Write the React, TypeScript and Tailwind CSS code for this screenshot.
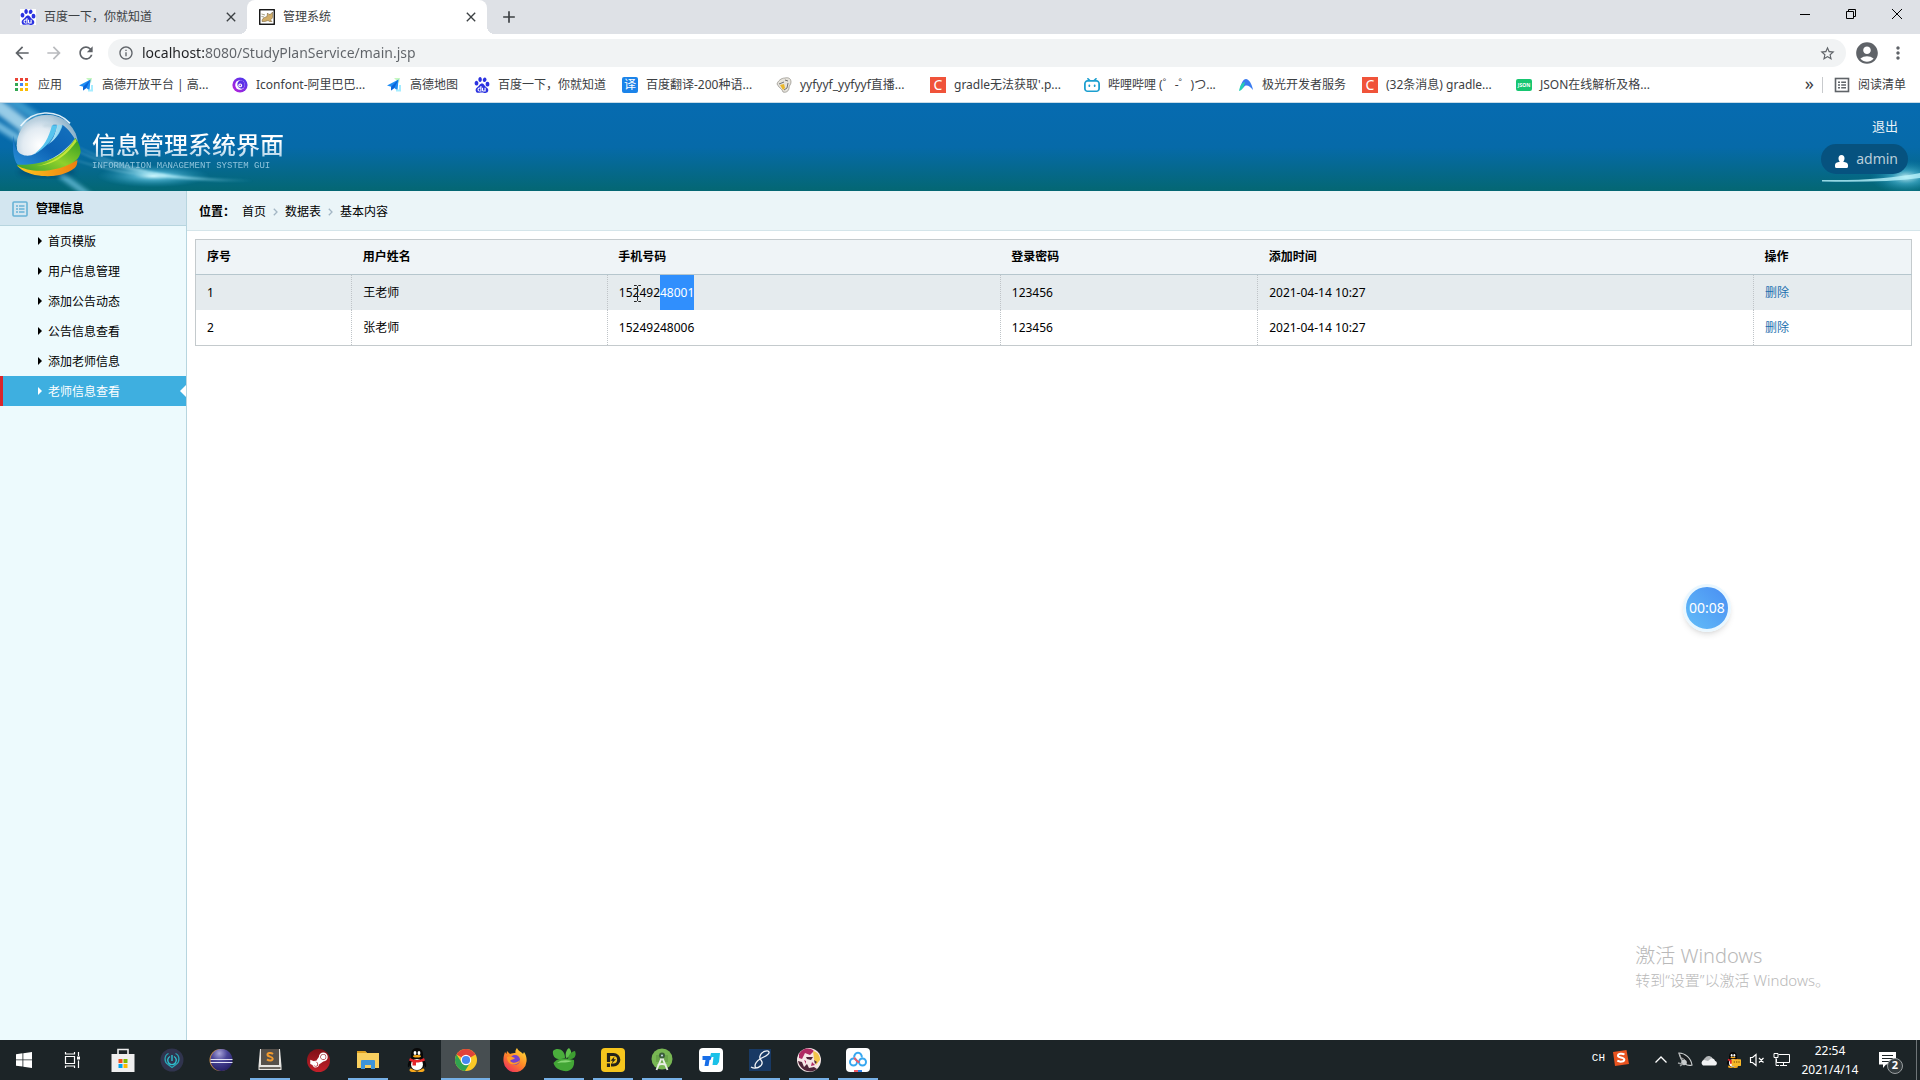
import React from 'react'
import { useState } from 'react'
import { SiBaidu, SiBilibili } from 'react-icons/si'
import { FaSteamSymbol } from 'react-icons/fa'
import { MdAccountCircle, MdMoreVert, MdStarBorder, MdInfoOutline, MdRefresh, MdArrowBack, MdArrowForward, MdClose, MdAdd } from 'react-icons/md'

interface Teacher {
    id: number;
    name: string;
    phone: string;
    password: string;
    time: string;
}

interface Bookmark {
    label: string;
    width: string;
    icon: React.ReactNode;
}

const teachers: Teacher[] = [
    { id: 1, name: '王老师', phone: '15249248001', password: '123456', time: '2021-04-14 10:27' },
    { id: 2, name: '张老师', phone: '15249248006', password: '123456', time: '2021-04-14 10:27' },
]

const menu = ['首页模版', '用户信息管理', '添加公告动态', '公告信息查看', '添加老师信息', '老师信息查看']

const columns = [
    { title: '序号', width: 'w-[9.1%]' },
    { title: '用户姓名', width: 'w-[14.9%]' },
    { title: '手机号码', width: 'w-[22.9%]' },
    { title: '登录密码', width: 'w-[15%]' },
    { title: '添加时间', width: 'w-[28.9%]' },
    { title: '操作', width: 'w-[9.2%]' },
]

/* ---------- small icons ---------- */

const AppsIcon = () => (
    <svg viewBox="0 0 16 16" className="size-4">
        {[['#ea4335', '#ea4335', '#ea4335'], ['#34a853', '#4285f4', '#fbbc04'], ['#34a853', '#fbbc04', '#fbbc04']].map((row, y) =>
            row.map((fill, x) => <rect key={`${x}${y}`} x={1 + x * 5} y={1 + y * 5} width="3" height="3" fill={fill} />)
        )}
    </svg>
)

const AmapIcon = () => (
    <svg viewBox="0 0 16 16" className="size-4">
        <path d="M8 1h6l-1 5z" fill="#c5f7c0" />
        <path d="M1 8.500 12.500 2.500 11.500 13.500 8.200 11 5 13.500 5.200 9.800z" fill="#1e8df5" />
        <path d="m5.200 9.800 7.300-7.300L8.200 11 5 13.500z" fill="#0a63d8" />
        <path d="M10 13.500h5M14 8v5" stroke="#a5ecff" strokeWidth="2" />
    </svg>
)

const IconfontIcon = () => (
    <svg viewBox="0 0 16 16" className="size-4">
        <defs>
            <linearGradient id="iconfont" x1="0" y1="1" x2="1" y2="0">
                <stop offset="0" stopColor="#c31ed8" />
                <stop offset="1" stopColor="#3b3af0" />
            </linearGradient>
        </defs>
        <circle cx="8" cy="8" r="7.600" fill="url(#iconfont)" />
        <circle cx="8" cy="8" r="4.800" fill="#fff" />
        <path d="M8.500 3.200a4.600 4.600 0 0 1 2.300 8.300A3.400 3.400 0 0 1 8.500 3.200z" fill="#5a2fe6" />
        <circle cx="8.200" cy="8.400" r="1.900" fill="#fff" />
        <circle cx="8.200" cy="8.400" r=".8" fill="#8a2be0" />
    </svg>
)

const LetterIcon = ({ letter, className }: { letter: string; className: string }) => (
    <span className={`flex w-4 shrink-0 items-center justify-center text-white ${className}`}>{letter}</span>
)

const DogIcon = () => (
    <svg viewBox="0 0 16 16" className="size-4">
        <path d="M1 7c1-3 4-6 8-6 4-1 6 1 6 4s-2 3-2 6-3 5-6 4c-1-3-3-4-4-5z" fill="#e6e3dc" stroke="#7d7a72" strokeWidth=".6" />
        <path d="M4 8 8 7l1 4-2 2z" fill="#eab72c" />
        <path d="M3 7l5-2M8 13l3-2 1-5M9 3l3 1" stroke="#555" strokeWidth=".8" fill="none" />
    </svg>
)

const AuroraIcon = () => (
    <svg viewBox="0 0 16 16" className="size-4">
        <path d="M2 13C3 6 5 2 8 2s6 5 7 11c-3-4-7-6-9-3z" fill="#3b7cf0" />
        <path d="M1 14c1-5 2-8 6-9-1 4-2 8-6 9z" fill="#25d0b4" />
    </svg>
)

const ReadingListIcon = ({ className }: { className: string }) => (
    <svg viewBox="0 0 16 16" className={className} fill="none" stroke="currentColor">
        <rect x="1.500" y="1.500" width="13" height="13" strokeWidth="1.600" />
        <path d="M4 5.200h2M4 8h2M4 10.800h2M7.200 5.200H12M7.200 8H12M7.200 10.800H12" strokeWidth="1.500" />
    </svg>
)

const TomcatIcon = () => (
    <svg viewBox="0 0 16 16" className="size-4">
        <rect x=".75" y=".75" width="14.500" height="14.500" fill="#fff" stroke="#000" strokeWidth="1.300" />
        <path d="M3 12.500c0-4 3-4 5-5l.5-3.500L10 5.500l2-.5 1.500-2v4c.5 2-1 3-2 4l1.500 1.500h-2.500L9 11.500l-3 1z" fill="#d1ad68" stroke="#6b552c" strokeWidth=".5" />
        <path d="M2.500 5 6 6M2.500 7.500 5 8" stroke="#80794f" strokeWidth=".7" />
    </svg>
)

const bookmarks: Bookmark[] = [
    { label: '应用', width: 'w-16', icon: <AppsIcon /> },
    { label: '高德开放平台 | 高...', width: 'w-[154px]', icon: <AmapIcon /> },
    { label: 'Iconfont-阿里巴巴...', width: 'w-[154px]', icon: <IconfontIcon /> },
    { label: '高德地图', width: 'w-[88px]', icon: <AmapIcon /> },
    { label: '百度一下，你就知道', width: 'w-[148px]', icon: <SiBaidu className="size-4 text-[#2b32e0]" /> },
    { label: '百度翻译-200种语...', width: 'w-[154px]', icon: <LetterIcon letter="译" className="h-4 rounded-xs bg-[#1b83e9] text-xs" /> },
    { label: 'yyfyyf_yyfyyf直播...', width: 'w-[154px]', icon: <DogIcon /> },
    { label: "gradle无法获取'.p...", width: 'w-[154px]', icon: <LetterIcon letter="C" className="h-4 bg-[#f0533a] text-sm" /> },
    { label: '哔哩哔哩 (゜-゜)つ...', width: 'w-[154px]', icon: <SiBilibili className="size-4 text-[#1c9fd0]" /> },
    { label: '极光开发者服务', width: 'w-[124px]', icon: <AuroraIcon /> },
    { label: '(32条消息) gradle...', width: 'w-[154px]', icon: <LetterIcon letter="C" className="h-4 bg-[#f0533a] text-sm" /> },
    { label: 'JSON在线解析及格...', width: 'w-[154px]', icon: <LetterIcon letter="JSON" className="h-3 rounded-xs bg-[#17c671] text-[5px] font-bold" /> },
]

/* ---------- browser ---------- */

const Browser = () => {
    const [url, setUrl] = useState('localhost:8080/StudyPlanService/main.jsp')

    return (
        <div className="border-b border-[#c9dce8] bg-white text-[#3c4043]">
            <div className="flex h-[34px] items-center bg-[#dee1e6] text-xs">
                <div className="flex w-[247px] items-center pr-2 pl-5">
                    <span className="bg-white"><SiBaidu className="size-4 text-[#2b32e0]" /></span>
                    <span className="flex-1 pl-2">百度一下，你就知道</span>
                    <button aria-label="关闭"><MdClose className="size-4" /></button>
                </div>
                <div className="relative flex h-full w-60 items-center rounded-t-lg bg-white pr-2 pl-3">
                    <span className="absolute bottom-0 -left-2 size-2 bg-[radial-gradient(circle_at_0_0,transparent_8px,white_8px)]"></span>
                    <span className="absolute -right-2 bottom-0 size-2 bg-[radial-gradient(circle_at_100%_0,transparent_8px,white_8px)]"></span>
                    <TomcatIcon />
                    <span className="flex-1 pl-2">管理系统</span>
                    <button aria-label="关闭"><MdClose className="size-4" /></button>
                </div>
                <button aria-label="新标签页" className="pl-3"><MdAdd className="size-5" /></button>
                <div className="ml-auto flex items-center gap-[34px] pr-[17px] pb-1.5 text-black">
                    <button aria-label="最小化">
                        <svg viewBox="0 0 12 12" className="size-3" stroke="currentColor"><path d="M1 6.500h10" /></svg>
                    </button>
                    <button aria-label="还原">
                        <svg viewBox="0 0 12 12" className="size-3" stroke="currentColor" fill="none"><path d="M1.500 3.500h7v7h-7zM3.500 3.500v-2h7v7h-2" /></svg>
                    </button>
                    <button aria-label="关闭窗口">
                        <svg viewBox="0 0 12 12" className="size-3" stroke="currentColor"><path d="M1 1l10 10M11 1 1 11" /></svg>
                    </button>
                </div>
            </div>

            <div className="flex h-[34px] items-center pt-1 text-[#5f6368]">
                <div className="flex items-center gap-3 px-3">
                    <button aria-label="后退"><MdArrowBack className="size-5" /></button>
                    <button aria-label="前进"><MdArrowForward className="size-5 text-[#b9bbbe]" /></button>
                    <button aria-label="刷新"><MdRefresh className="size-5" /></button>
                </div>
                <div className="flex h-7 flex-1 items-center rounded-full bg-[#f1f3f4] pr-2.5 pl-2.5">
                    <MdInfoOutline className="size-4" />
                    <input
                        aria-label="地址栏"
                        value={url}
                        onChange={(e) => setUrl(e.target.value)}
                        className="flex-1 bg-[linear-gradient(90deg,#202124_70px,#5f6368_70px)] bg-clip-text pl-2 text-sm text-transparent outline-none"
                    />
                    <MdStarBorder className="size-[17px]" />
                </div>
                <MdAccountCircle className="mx-2 size-[26px]" />
                <button aria-label="菜单" className="pr-3"><MdMoreVert className="size-5" /></button>
            </div>

            <div className="flex h-[34px] items-center pl-3.5 text-xs">
                {bookmarks.map((item, index) => (
                    <a key={index} href="#" className={`flex shrink-0 items-center gap-2 whitespace-nowrap ${item.width}`}>
                        {item.icon}
                        <span>{item.label}</span>
                    </a>
                ))}
                <div className="ml-auto flex items-center pr-3.5">
                    <button className="pr-2 pb-1 text-lg leading-4">»</button>
                    <button className="flex items-center gap-2 border-l border-[#c8cacd] pl-[11px]">
                        <ReadingListIcon className="size-4 text-[#5f6368]" />
                        阅读清单
                    </button>
                </div>
            </div>
        </div>
    )
}

/* ---------- page header ---------- */

const Logo = () => (
    <svg viewBox="0 21 900 264" className="absolute top-0 left-0 h-[88px] w-[300px]">
        <defs>
            <radialGradient id="glow">
                <stop offset="0" stopColor="#d9fbff" />
                <stop offset=".35" stopColor="#6fd0ee" stopOpacity=".6" />
                <stop offset="1" stopColor="#2b9cc4" stopOpacity="0" />
            </radialGradient>
            <radialGradient id="glass" cx=".38" cy=".5" r=".62">
                <stop offset="0" stopColor="#fff" />
                <stop offset=".45" stopColor="#e2ebf2" />
                <stop offset="1" stopColor="#86aec8" />
            </radialGradient>
            <linearGradient id="blueBand" x1="0" y1="1" x2="1" y2="0">
                <stop offset="0" stopColor="#2a90d8" />
                <stop offset=".5" stopColor="#0c62b4" />
                <stop offset="1" stopColor="#1472be" />
            </linearGradient>
            <linearGradient id="greenBand" x1="0" y1="1" x2="1" y2="0">
                <stop offset="0" stopColor="#2e9c2a" />
                <stop offset=".5" stopColor="#8fd02c" />
                <stop offset="1" stopColor="#2c9a22" />
            </linearGradient>
            <linearGradient id="orangeBand">
                <stop offset="0" stopColor="#ffc91f" />
                <stop offset="1" stopColor="#ee7f10" />
            </linearGradient>
            <linearGradient id="tail">
                <stop offset="0" stopColor="#8fdcf5" stopOpacity=".2" />
                <stop offset=".5" stopColor="#c9f8ff" />
                <stop offset="1" stopColor="#6fd0ee" stopOpacity="0" />
            </linearGradient>
            <filter id="soft"><feGaussianBlur stdDeviation="7" /></filter>
            <filter id="softer"><feGaussianBlur stdDeviation="2.500" /></filter>
        </defs>
        <g filter="url(#soft)" fill="none">
            <path d="M-20 20 100 110" stroke="#c8ecfa" strokeWidth="40" opacity=".75" />
            <path d="M-20 80 60 130" stroke="#9cd8f2" strokeWidth="22" opacity=".7" />
            <path d="M30 10 120 70" stroke="#5db7e0" strokeWidth="26" opacity=".6" />
            <path d="M180 235 270 300" stroke="#6cc0dd" strokeWidth="18" opacity=".8" />
        </g>
        <ellipse cx="460" cy="240" rx="170" ry="34" fill="url(#glow)" />
        <g filter="url(#softer)" fill="none" stroke="url(#tail)">
            <path d="M220 160C330 210 430 250 760 254" strokeWidth="5" />
            <path d="M220 145C330 205 450 236 620 250" strokeWidth="3" />
            <path d="M190 180C330 230 450 244 700 256" strokeWidth="3" />
        </g>
        <ellipse cx="140" cy="228" rx="86" ry="16" fill="#033a66" opacity=".45" filter="url(#soft)" />
        <circle cx="142" cy="148" r="92" fill="url(#glass)" />
        <path d="M60 110c20-40 60-50 100-40M130 90c20-6 40 0 60 20" stroke="#bcd0dd" strokeWidth="8" fill="none" opacity=".6" filter="url(#softer)" />
        <path d="M42 118C40 170 66 184 94 178 130 165 146 130 160 86h10c-4 28-8 40-20 56 22-20 30-36 36-56 14 8 28 24 38 42C186 180 120 216 54 208 38 190 36 150 42 118z" fill="url(#blueBand)" />
        <path d="M156 88c-10 36-22 64-56 88 36-18 64-46 72-88z" fill="#57c4ee" />
        <path d="M188 88c-8 26-20 40-46 60 14-18 28-36 32-62z" fill="#8edcf6" opacity=".8" />
        <path d="M226 126C192 182 130 210 50 206c20 22 50 28 84 22 60-6 106-30 108-62-2-16-6-28-16-40z" fill="url(#greenBand)" />
        <path d="M226 128c-30 46-68 74-116 82 60-4 94-38 120-74z" fill="#d9f03c" opacity=".8" />
        <path d="M50 208c44 26 124 22 182-16 0 12-2 18-8 24-30 22-62 26-96 24-32-2-60-12-78-32z" fill="url(#orangeBand)" />
        <path d="M62 90A96 96 0 0 1 210 82" stroke="#f3fbff" strokeWidth="5" fill="none" opacity=".9" />
    </svg>
)

const Header = () => (
    <header className="relative flex h-[88px] justify-between overflow-hidden bg-[linear-gradient(#066bb0,#066aa9_50%,#046773)]">
        <Logo />
        <svg viewBox="0 0 100 50" className="absolute right-0 bottom-0 h-[50px] w-[100px]">
            <defs>
                <radialGradient id="flare">
                    <stop offset="0" stopColor="#d6fbff" stopOpacity=".9" />
                    <stop offset=".4" stopColor="#4fb9d6" stopOpacity=".6" />
                    <stop offset="1" stopColor="#1187ae" stopOpacity="0" />
                </radialGradient>
            </defs>
            <ellipse cx="86" cy="36" rx="36" ry="17" fill="url(#flare)" />
            <path d="M2 39Q60 40 100 32v5Q60 42 2 40.500z" fill="#b8f3fb" opacity=".8" />
        </svg>
        <div className="relative pt-7 pl-[92px]">
            <h1 className="bg-linear-to-b from-white from-40% to-[#a9cfe6] bg-clip-text text-2xl leading-7 font-medium text-transparent">信息管理系统界面</h1>
            <p className="pt-px font-['Liberation_Mono',monospace] text-[9px] leading-3 text-[#8fc4dc]">INFORMATION MANAGEMENT SYSTEM GUI</p>
        </div>
        <div className="relative flex flex-col items-end pt-[13px] pr-3">
            <a href="#" className="pr-2.5 text-[13px] leading-5 text-[#e9f2f7]">退出</a>
            <div className="mt-2 flex h-[30px] items-center gap-2 rounded-full bg-[#06527f] pr-2.5 pl-3.5 text-sm text-[#b8ceda]">
                <svg viewBox="0 0 13 13" className="mt-1 size-[13px]" fill="#fff">
                    <path d="M6.500 0c2 0 3 1.400 3 3.300 0 1.500-.5 2.700-1.300 3.400 2.800.5 4.800 1.300 4.800 3.300v1.500q0 1.500-1.500 1.500h-10Q0 13 0 11.500V10c0-2 2-2.800 4.800-3.300-.8-.7-1.300-1.900-1.300-3.400C3.500 1.400 4.500 0 6.500 0z" />
                </svg>
                admin
            </div>
        </div>
    </header>
)

const Sidebar = () => {
    const [active, setActive] = useState(5)

    return (
        <aside className="w-[187px] shrink-0 border-r border-[#b7d5df] bg-[#edfafd]">
            <h2 className="flex h-[35px] items-center gap-2 border-b border-[#b7d5df] bg-[#d3e6f0] pt-0.5 pl-3 text-xs font-bold">
                <svg viewBox="0 0 16 16" className="size-4" fill="none" stroke="#68b3d6">
                    <rect x="1" y="1" width="14" height="14" rx="1" strokeWidth="1.600" />
                    <path d="M4 5h2M4 8h2M4 11h2M7 5h5.500M7 8h5.500M7 11h5.500" strokeWidth="1.400" />
                </svg>
                管理信息
            </h2>
            <ul>
                {menu.map((item, index) => (
                    <li key={index}>
                        <button
                            onClick={() => setActive(index)}
                            className={`flex h-[30px] w-full items-center gap-1.5 border-l-3 pt-0.5 pl-[35px] text-xs ${index === active ? 'border-[#d9252b] bg-[#3eafe0] text-white' : 'border-transparent'}`}
                        >
                            <svg viewBox="0 0 4 8" className="mb-0.5 h-2 w-1" fill="currentColor"><path d="M0 0l4 4-4 4z" /></svg>
                            {item}
                            {index === active && (
                                <svg viewBox="0 0 6 12" className="mb-0.5 ml-auto h-3 w-1.5" fill="currentColor"><path d="M6 0v12L0 6z" /></svg>
                            )}
                        </button>
                    </li>
                ))}
            </ul>
        </aside>
    )
}

const Chevron = () => (
    <svg viewBox="0 0 5 8" className="h-2 w-[5px]" fill="none" stroke="#a3b6c4" strokeWidth="1.300"><path d="M.8.8 4 4 .8 7.200" /></svg>
)

const Content = () => (
    <main className="flex-1 bg-white text-xs">
        <nav className="flex h-10 items-center gap-[7px] border-b border-[#d5e5ea] bg-[#ebf5f8] pt-0.5 pl-3">
            <b>位置：</b>
            <a href="#">首页</a>
            <Chevron />
            <a href="#">数据表</a>
            <Chevron />
            <a href="#">基本内容</a>
        </nav>
        <div className="p-2">
            <table className="w-full table-fixed border-collapse border border-[#c4cacd]">
                <thead>
                    <tr className="h-[35px] border-b border-[#b6c6cd] bg-[#eff4f7] text-left">
                        {columns.map((col) => (
                            <th key={col.title} className={`pl-[11px] font-bold ${col.width}`}>{col.title}</th>
                        ))}
                    </tr>
                </thead>
                <tbody>
                    {teachers.map((row, index) => (
                        <tr key={row.id} className={`h-[35px] [&>td]:pl-[11px] [&>td+td]:border-l [&>td+td]:border-dotted [&>td+td]:border-[#bfc4c8] ${index === 0 ? 'bg-[#e5ebee]' : ''}`}>
                            <td>{row.id}</td>
                            <td>{row.name}</td>
                            <td className="leading-[35px]">
                                {index === 0 ? (
                                    <span className="relative flex">
                                        {row.phone.slice(0, 6)}
                                        <mark className="bg-[#308ffd] text-white">{row.phone.slice(6)}</mark>
                                        <svg viewBox="0 0 9 17" className="absolute top-2.5 left-3.5 h-[17px] w-[9px]" fill="none" stroke="#222"><path d="M1 .5h2.500l1 1 1-1H8M4.500 1.500v14M1 16.500h2.500l1-1 1 1H8" /></svg>
                                    </span>
                                ) : row.phone}
                            </td>
                            <td>{row.password}</td>
                            <td>{row.time}</td>
                            <td><a href="#" className="text-[#1b6fae]">删除</a></td>
                        </tr>
                    ))}
                </tbody>
            </table>
        </div>
    </main>
)

/* ---------- taskbar ---------- */

const StoreIcon = () => (
    <svg viewBox="0 0 24 24" className="size-6">
        <path d="M7 7V1.500h10V7" stroke="#eee" strokeWidth="1.600" fill="none" />
        <path d="M.5 6h23v18H.5z" fill="#efefef" />
        <path d="M7.500 11h4v4h-4z" fill="#f04e1f" /><path d="M12.500 11h4v4h-4z" fill="#7fba00" />
        <path d="M7.500 16h4v4h-4z" fill="#00a4ef" /><path d="M12.500 16h4v4h-4z" fill="#ffb900" />
    </svg>
)

const MusicIcon = () => (
    <svg viewBox="0 0 24 24" className="size-6" fill="none">
        <circle cx="12" cy="12" r="11.500" fill="#30344e" />
        <path d="M8.500 5.500C4 7.500 4 14 8 16.500l4 3 4-3c4-2.500 4-9-.5-11" stroke="#2aa5b5" strokeWidth="1.300" />
        <path d="M10 8.500a4.300 4.300 0 1 0 4 0M12 7v6" stroke="#2fc0cf" strokeWidth="1.400" />
    </svg>
)

const EclipseIcon = () => (
    <svg viewBox="0 0 24 24" className="size-6">
        <defs>
            <radialGradient id="eclipse" cx=".4" cy=".2" r=".8">
                <stop offset="0" stopColor="#a7a3d8" />
                <stop offset=".45" stopColor="#4a4598" />
                <stop offset="1" stopColor="#262068" />
            </radialGradient>
        </defs>
        <circle cx="11.500" cy="12" r="11" fill="#c98d4a" />
        <circle cx="12.500" cy="12" r="11" fill="url(#eclipse)" />
        <path d="M1.500 11.500h22M1.500 14.500h22" stroke="#e4e4f6" strokeWidth="1" />
    </svg>
)

const SublimeIcon = () => (
    <svg viewBox="0 0 24 24" className="size-6">
        <path d="M2 1h20l1.500 17v4H.5v-4z" fill="#e7e5e2" />
        <path d="M3 1h18v16H3z" fill="#55504b" />
        <path d="M1.500 19h21v2h-21z" fill="#6c6863" />
        <path d="M15 6c-2-1.500-5.700-1.200-5.500 1 .3 2 5 1.300 5.200 3.600.1 2.400-3.800 2.300-5.700.8" fill="none" stroke="#f39a2d" strokeWidth="2" />
    </svg>
)

const SteamIcon = () => (
    <span className="flex size-[23px] items-center justify-center rounded-full bg-linear-to-b from-[#7d1016] to-[#c4202a] text-white"><FaSteamSymbol className="size-5" /></span>
)

const FolderIcon = () => (
    <svg viewBox="0 0 24 24" className="size-6">
        <path d="M1 3h8l2 2h12v15H1z" fill="#f8cf5f" />
        <path d="M1 3h8l2 2H1z" fill="#dc9f20" />
        <path d="M5 21v-8q0-1 1-1h12q1 0 1 1v8h-4v-4H9v4z" fill="#3d94d9" />
    </svg>
)

const QQIcon = ({ className, children }: { className: string; children?: React.ReactNode }) => (
    <svg viewBox="0 0 24 24" className={className}>
        <ellipse cx="8.500" cy="22" rx="4" ry="2" fill="#f7a81b" /><ellipse cx="15.500" cy="22" rx="4" ry="2" fill="#f7a81b" />
        <path d="M12 0c4 0 6 3 6 7v3c2 3 4 6 3 9-1 1-2-2-2-2 0 4-4 5.500-7 5.500S5 21 5 17c0 0-1 3-2 2-1-3 1-6 3-9V7c0-4 2-7 6-7z" fill="#080808" />
        <ellipse cx="12" cy="16.500" rx="6" ry="5.500" fill="#fff" />
        <ellipse cx="10" cy="5" rx="1.400" ry="2" fill="#fff" /><ellipse cx="14" cy="5" rx="1.400" ry="2" fill="#fff" />
        <ellipse cx="12" cy="8.300" rx="4" ry="1.200" fill="#f7a81b" />
        <path d="M5 10c4 2.500 10 2.500 14 0l1 2.500c-3 1.500-6 2-9 2v3H7.500v-3.500L4 12.500z" fill="#e5252b" />
        {children}
    </svg>
)

const ChromeIcon = () => (
    <svg viewBox="0 0 24 24" className="size-6">
        <circle cx="12" cy="12" r="11" fill="#fbc926" />
        <path d="M12 12 2.500 6.500A11 11 0 0 1 21.500 6.500z" fill="#e0433a" />
        <path d="M12 7h9.800a11 11 0 0 0-.3-.5H2.500z" fill="#e0433a" />
        <path d="M2.500 6.500A11 11 0 0 0 11 23l5.300-8.500L12 12 7.700 14.500z" fill="#31a350" />
        <circle cx="12" cy="12" r="5.200" fill="#fff" />
        <circle cx="12" cy="12" r="4.100" fill="#4688f1" />
    </svg>
)

const FirefoxIcon = () => (
    <svg viewBox="0 0 24 24" className="size-6">
        <defs>
            <linearGradient id="fox" x1=".9" y1="0" x2=".2" y2="1">
                <stop offset="0" stopColor="#ffe13a" />
                <stop offset=".5" stopColor="#ff8a26" />
                <stop offset="1" stopColor="#ee2c5d" />
            </linearGradient>
        </defs>
        <path d="M14 0c1 3 5 4 6 6l1-2c2 3 3 6 2.500 9.500A11.500 11.500 0 0 1 .6 14C0 10 1 7 2 4l1.500 2L4 3l3 3c2-1 4-1 5.500-1C12 3 13 1 14 0z" fill="url(#fox)" />
        <circle cx="12" cy="12" r="5" fill="#7542cf" />
        <path d="M4 9c4-1 5 0 8 1-1 2-4 1-5 3 3 3 7 2 10-1-1 6-13 7-13-3z" fill="#ff9a2a" />
    </svg>
)

const LeafIcon = () => (
    <svg viewBox="0 0 24 24" className="size-6">
        <path d="M1 3C5-1 13 1 13 10c-7 3-13 0-12-7z" fill="#4aae3c" />
        <path d="M14 10c-1-4 0-8 3-10 4 4 2 9-3 10z" fill="#5fc14c" />
        <path d="M16 11c0-4 4-8 7-8 2 5-1 9-7 8z" fill="#3d9c31" />
        <path d="M1.500 15c4-6 13-5 20.500-3 1 7-3 12-10 11-5.500-1-9-3-10.500-8z" fill="#43a636" />
        <path d="M5 15c4-3.500 10-3 15-2-4 2-9 1-15 2z" fill="#8ad877" />
    </svg>
)

const LdIcon = () => (
    <svg viewBox="0 0 24 24" className="size-6" fill="none">
        <rect width="24" height="24" rx="4" fill="#f6c51d" />
        <path d="M7.500 14V6.500h5a5 5 0 0 1 0 10.500H10" stroke="#25221a" strokeWidth="3.200" />
        <path d="M5.900 15.400H9V19H5.900z" fill="#25221a" />
        <path d="m13.500 8.500-4 4.200h2.200L10.800 15.500l4.200-4.200h-2.300z" fill="#25221a" />
    </svg>
)

const AndroidStudioIcon = () => (
    <svg viewBox="0 0 24 24" className="size-6" fill="none">
        <circle cx="12" cy="11" r="10.500" fill="#78b653" />
        <path d="M6 7h12v7H6z" fill="#5f9843" opacity=".6" />
        <path d="M12 9 6.500 22M12 9l5.500 13M7.500 17.500q4.500-3 9 0" stroke="#e8eee4" strokeWidth="1.900" />
        <circle cx="12" cy="7.500" r="3" fill="#3b5d3a" /><circle cx="12" cy="7.500" r="1" fill="#cde" />
    </svg>
)

const TimIcon = () => (
    <svg viewBox="0 0 24 24" className="size-6">
        <rect width="24" height="24" rx="4" fill="#fff" />
        <path d="M3.500 8h9.500l-1.500 4h-1l-1 6H5.500l1-6h-3z" fill="#176ee8" />
        <path d="M12 5h9l-1 9-2 3h-4.500l1-8H11z" fill="#1bc1e8" />
    </svg>
)

const SpyIcon = () => (
    <svg viewBox="0 0 24 24" className="size-6" fill="none">
        <rect x="1" y="1" width="22" height="22" fill="#183964" />
        <path d="M3 19c5 3 12-1 11-5-1-3-3-3-2-6 1-4 8-7 9-4s-6 5-9 7-5 5-5 7 3 3 5 0" stroke="#f0f3f7" strokeWidth="1.300" />
    </svg>
)

const AvatarIcon = () => (
    <svg viewBox="0 0 24 24" className="size-6">
        <circle cx="12" cy="12" r="12" fill="#f6e6e6" />
        <path d="M2 6c4-6 10-7 15-3l-4 4-5-2-3 6-3-1z" fill="#b02a63" />
        <path d="M16 3c5 1 7 5 7 9l-4 5-2-6z" fill="#f2c64a" />
        <path d="M1 13l4 1 2 5 3-3 2 4 5-1 3 2c-6 5-17 2-19-8zM9 9l7 0-2 3-4-1zM17 12l3 2-2 2z" fill="#4e2438" />
        <path d="M7 12l2 1v3zM15 14l3 3-4 1z" fill="#b02a63" />
    </svg>
)

const NetdiskIcon = () => (
    <svg viewBox="0 0 24 24" className="size-6" fill="none">
        <rect width="24" height="24" rx="4" fill="#fff" />
        <circle cx="7.500" cy="14" r="3.500" stroke="#37a7f0" strokeWidth="2" /><circle cx="16.500" cy="14" r="3.500" stroke="#37a7f0" strokeWidth="2" />
        <path d="M8.300 9.500a3.800 3.800 0 1 1 7.400 0" stroke="#37a7f0" strokeWidth="2" />
        <path d="M8.300 9.500c1 3 3 3.500 5 5" stroke="#ef5a66" strokeWidth="2" />
        <path d="M8 22h4v2H8z" fill="#ef5a66" /><path d="M12 22h4v2h-4z" fill="#2c81e8" />
    </svg>
)

const apps = [
    { name: 'Microsoft Store', icon: <StoreIcon />, open: false },
    { name: '音乐', icon: <MusicIcon />, open: false },
    { name: 'Eclipse', icon: <EclipseIcon />, open: false },
    { name: 'Sublime Text', icon: <SublimeIcon />, open: true },
    { name: 'Steam', icon: <SteamIcon />, open: false },
    { name: '文件资源管理器', icon: <FolderIcon />, open: true },
    { name: 'QQ', icon: <QQIcon className="size-6" />, open: false },
    { name: 'Chrome', icon: <ChromeIcon />, open: true, focused: true },
    { name: 'Firefox', icon: <FirefoxIcon />, open: false },
    { name: 'Navicat', icon: <LeafIcon />, open: true },
    { name: '模拟器', icon: <LdIcon />, open: true },
    { name: 'Android Studio', icon: <AndroidStudioIcon />, open: true },
    { name: 'TIM', icon: <TimIcon />, open: false },
    { name: '编辑器', icon: <SpyIcon />, open: true },
    { name: '头像', icon: <AvatarIcon />, open: true },
    { name: '百度网盘', icon: <NetdiskIcon />, open: true },
]

const Tray = () => (
    <div className="ml-auto flex items-center text-white">
        <span className="pr-2 pb-1 font-['Liberation_Mono',monospace] text-[11px]">CH</span>
        <svg viewBox="0 0 16 16" className="mr-6 mb-1 size-4">
            <path d="M0 2 13.500 0 16 14 2 16z" fill="#e9531f" />
            <path d="M11.500 4.500C9 3 4.800 3.500 5 5.800c.2 2 6 1.200 6.300 3.600.2 2.600-4.500 2.800-7 1.300" fill="none" stroke="#fff" strokeWidth="2" />
        </svg>
        <div className="flex items-center gap-2">
            <svg viewBox="0 0 16 16" className="size-4" fill="none" stroke="#fff" strokeWidth="1.300"><path d="m2.500 10.500 5.500-5.500 5.500 5.500" /></svg>
            <svg viewBox="0 0 16 16" className="size-4" fill="none">
                <path d="M2 1c6 0 12 5 13 12-5 2-11-3-13-12z" stroke="#c8cccc" strokeWidth="1.200" fill="#181c1e" />
                <path d="M2 1 6 10M5 6l3 2" stroke="#aaa" /><circle cx="7" cy="10.500" r="2.800" fill="#c9cdce" /><path d="M1 11l4 1M3 14l3-2" stroke="#9a9fa0" strokeWidth="1.500" />
            </svg>
            <svg viewBox="0 0 16 16" className="size-4">
                <path d="M3 12a4 4 0 0 1 1-6 4.500 4.500 0 0 1 8 1z" fill="#b3b6b8" />
                <path d="M2 13.500a3 3 0 0 1 1-5.500l4 1 3-2.500c3-.5 4 1.500 4 2.500 2.500.5 2.500 4 0 4.500z" fill="#f2f3f4" />
            </svg>
            <QQIcon className="size-4">
                <rect x="10" y="11" width="14" height="10" rx="1" fill="#f9b928" />
                <path d="m14 20v4l4-4z" fill="#f9b928" />
                <path d="M13 15h2M16.500 15h2M20 15h2" stroke="#6b4200" strokeWidth="1.800" />
            </QQIcon>
            <svg viewBox="0 0 16 16" className="size-4" fill="none" stroke="#fff">
                <path d="M1.500 5.500h2L7 2.500v11L3.500 10.500h-2zM10 6l4.500 4.500M14.500 6 10 10.500" strokeWidth="1.200" />
            </svg>
            <svg viewBox="0 0 18 16" className="h-4 w-[18px]" fill="none" stroke="#fff">
                <path d="M5.500 2.500h11v8h-13V7M10.500 10.500v3M7 13.500h7M1 1.500h4v4H1zM3 5.500v8h3" />
            </svg>
        </div>
        <div className="w-20 pr-0.5 text-center text-xs leading-[19px]">
            <div>22:54</div>
            <div>2021/4/14</div>
        </div>
        <button aria-label="通知" className="relative ml-2 pr-5">
            <svg viewBox="0 0 17 17" className="size-[17px]"><path d="M0 0h17v12.500H7L4 16v-3.500H0z" fill="#fff" /><path d="M3 3.500h11M3 6.500h11M3 9.500h7" stroke="#1c2528" strokeWidth="1.200" /></svg>
            <span className="absolute top-1.5 left-2 flex size-4 items-center justify-center rounded-full border border-[#9a9fa1] bg-[#333b3e] text-[11px] font-bold">2</span>
        </button>
        <span className="h-10 w-1 border-l border-[#6e7477]"></span>
    </div>
)

const Taskbar = () => (
    <footer className="flex h-10 bg-[#1c2427]">
        <button aria-label="开始" className="flex w-12 items-center justify-center">
            <svg viewBox="0 0 16 16" className="size-4" fill="#fff"><path d="M0 2.300 6.500 1.300v6.200H0zM7.300 1.200 16 0v7.500H7.300zM0 8.300h6.500v6.300L0 13.700zM7.300 8.300H16V16l-8.700-1.300z" /></svg>
        </button>
        <button aria-label="任务视图" className="mr-0.5 flex w-12 items-center justify-center">
            <svg viewBox="0 0 16 16" className="size-4" fill="none" stroke="#fff" strokeWidth="1.200"><path d="M1.500 4.500h9v7h-9zM1.500 0v2h9V0M1.500 16v-2h9v2M14.500 0v4M14.500 8.500V16" /><path d="M13 4.500h3v3h-3z" fill="#fff" stroke="none" /></svg>
        </button>
        {apps.map((app) => (
            <button
                key={app.name}
                aria-label={app.name}
                className={`relative flex w-[49px] items-center justify-center ${app.focused ? 'bg-[#474e51]' : ''}`}
            >
                {app.icon}
                {app.open && <span className={`absolute bottom-0 h-0.5 bg-[#76b0e6] ${app.focused ? 'w-full' : 'w-10'}`}></span>}
            </button>
        ))}
        <Tray />
    </footer>
)

const App = () => {
    return (
        <div className="relative flex min-h-screen flex-col bg-white font-['Noto_Sans','Noto_Sans_CJK_SC',sans-serif] text-black">
            <Browser />
            <Header />
            <div className="flex flex-1">
                <Sidebar />
                <Content />
            </div>
            <Taskbar />

            {/* floating recorder timer */}
            <div className="absolute right-[189px] bottom-[448px] flex size-12 items-center justify-center rounded-full border-3 border-[#e9f7ff] bg-linear-to-tr from-[#63bdf8] to-[#4a8ef2] text-sm text-white shadow-md">
                00:08
            </div>

            <div className="absolute right-[90px] bottom-[90px] font-light text-[#b9b9b9]">
                <div className="text-xl leading-7">激活 Windows</div>
                <div className="text-[15px] leading-5">转到“设置”以激活 Windows。</div>
            </div>
        </div>
    )
}

export default App
